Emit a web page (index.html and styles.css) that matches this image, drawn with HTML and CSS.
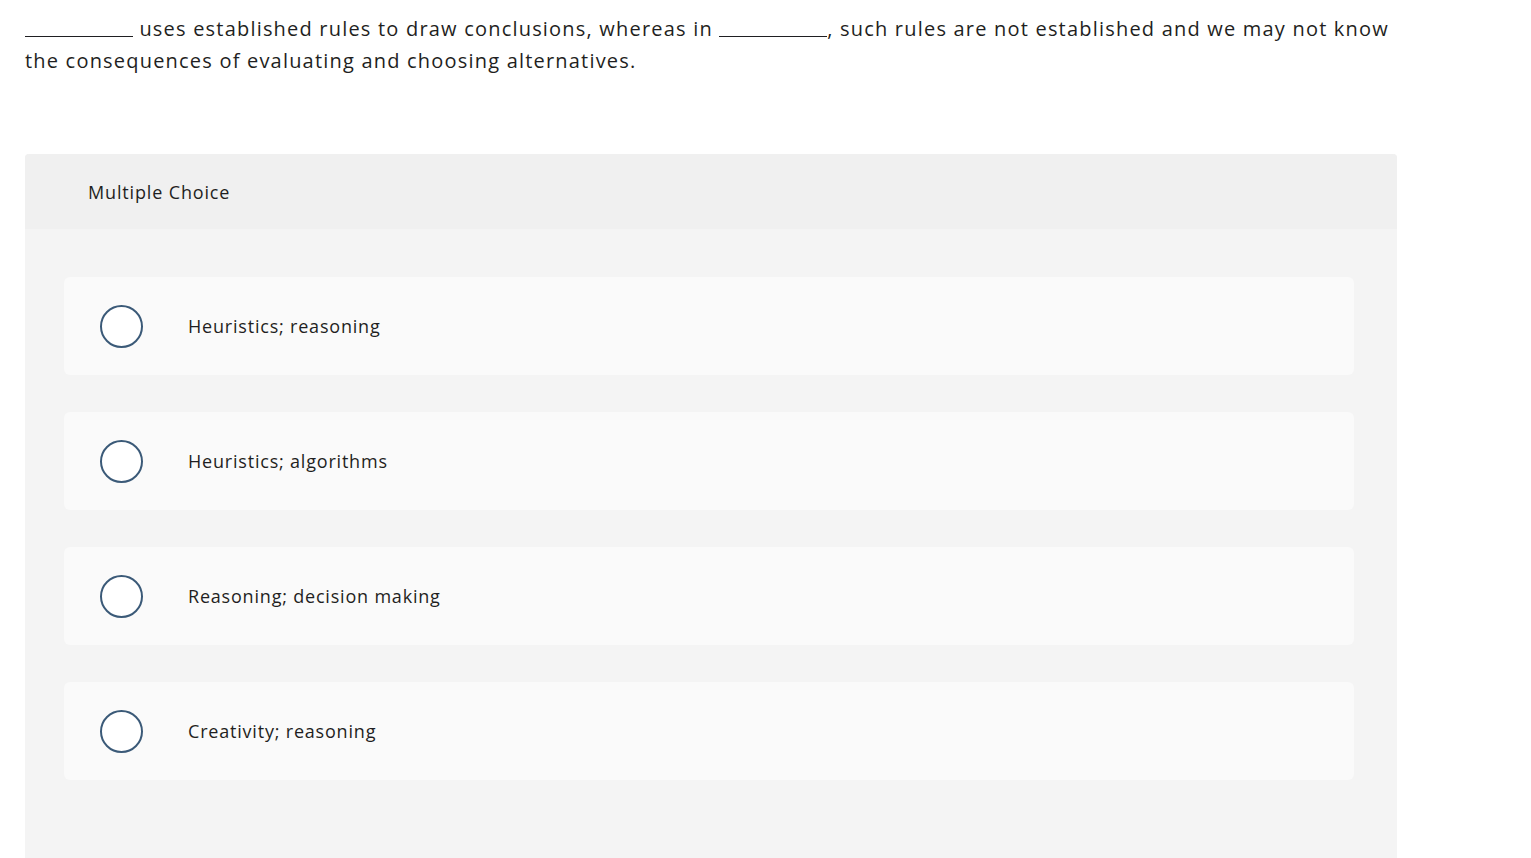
FILE: index.html
```html
<!DOCTYPE html>
<html>
<head>
<meta charset="utf-8">
<link rel="stylesheet" href="styles.css">
</head>
<body>
<div class="page">
  <p class="question"><span class="blank"></span> uses established rules to draw conclusions, whereas in <span class="blank"></span>, such rules are not established and we may not know the consequences of evaluating and choosing alternatives.</p>
  <section class="card">
    <header class="card-head">Multiple Choice</header>
    <div class="card-body">
      <label class="option"><span class="radio"></span><span class="opt-text">Heuristics; reasoning</span></label>
      <label class="option"><span class="radio"></span><span class="opt-text">Heuristics; algorithms</span></label>
      <label class="option"><span class="radio"></span><span class="opt-text">Reasoning; decision making</span></label>
      <label class="option"><span class="radio"></span><span class="opt-text">Creativity; reasoning</span></label>
    </div>
  </section>
</div>
</body>
</html>
```
FILE: styles.css
```css
html, body {
  margin: 0;
  padding: 0;
  background: #ffffff;
}
body {
  font-family: "Open Sans", Lato, sans-serif;
  color: #1f1f22;
}
.page {
  padding: 13px 134px 0 25px;
}
.question {
  margin: 0;
  font-size: 20px;
  line-height: 32px;
  letter-spacing: 1.2px;
  max-width: 1372px;
}
.blank {
  display: inline-block;
  width: 108px;
  height: 1px;
  border-bottom: 1.5px solid #1f1f22;
  vertical-align: baseline;
  margin-bottom: -1px;
}
.card {
  margin-top: 77px;
  width: 1372px;
  border-radius: 4px 4px 0 0;
  overflow: hidden;
  background: #f4f4f4;
}
.card-head {
  background: #f0f0f0;
  height: 75px;
  display: flex;
  align-items: center;
  padding-left: 63px;
  font-size: 18px;
  letter-spacing: 0.85px;
}
.card-body {
  padding: 48px 43px 80px 39px;
  display: flex;
  flex-direction: column;
  gap: 37px;
}
.option {
  display: flex;
  align-items: center;
  height: 98px;
  background: #fafafa;
  border-radius: 6px;
  padding-left: 36px;
}
.radio {
  box-sizing: border-box;
  width: 43px;
  height: 43px;
  border-radius: 50%;
  border: 2px solid #3b5a78;
  background: #ffffff;
  flex: none;
}
.opt-text {
  margin-left: 45px;
  font-size: 18px;
  letter-spacing: 0.8px;
}
```
